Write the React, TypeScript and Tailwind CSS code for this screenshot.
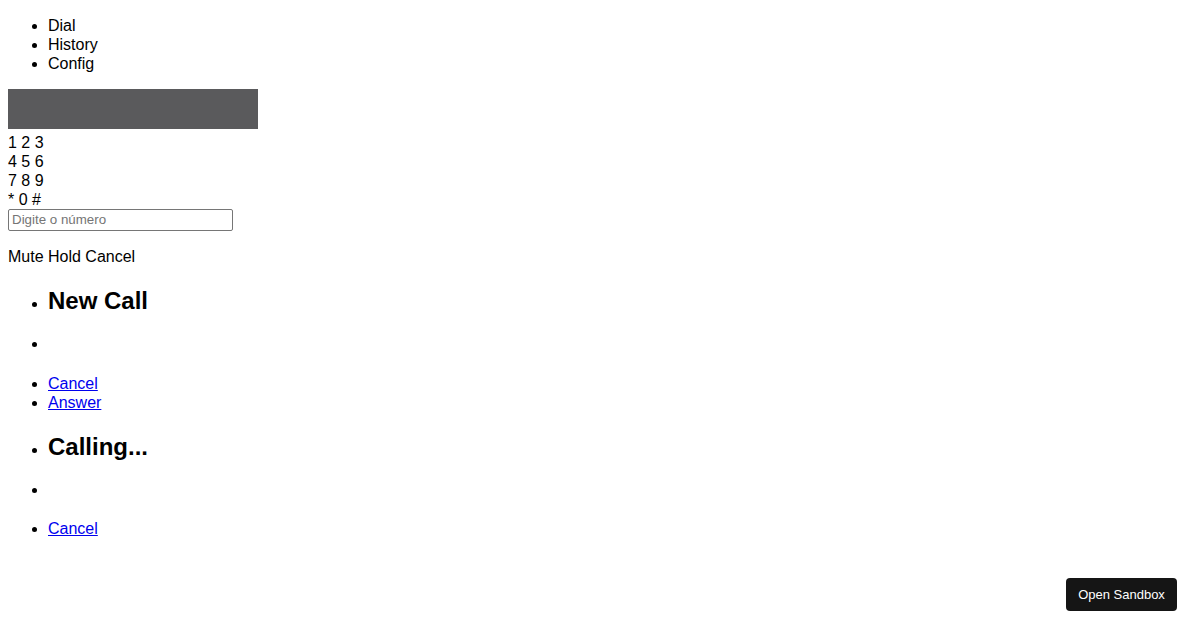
export default function App() {
  const font = { fontFamily: '"Liberation Sans", Arial, sans-serif' };
  return (
    <div className="relative h-[630px] w-[1200px] bg-white text-black" style={font}>
      <div className="px-2 pt-4 text-[16px] leading-[19px] [font-family:'Liberation_Sans',Arial,sans-serif]">
        <ul className="list-disc pl-10">
          <li>Dial</li>
          <li>History</li>
          <li>Config</li>
        </ul>
        <div className="mt-4 h-10 w-[250px] bg-[#5a5a5c]" />
        <div className="mt-1">
          <div>1 2 3</div>
          <div>4 5 6</div>
          <div>7 8 9</div>
          <div>* 0 #</div>
        </div>
        <input
          className="block h-[22px] w-[225px] rounded-[2px] border border-[#767676] px-[3px] pb-[1px] text-[13.33px] leading-[16px] placeholder:text-[#757575]"
          placeholder="Digite o número"
        />
        <p className="mt-4">Mute Hold Cancel</p>
        <ul className="list-disc pl-10">
          <li className="mt-[21px]">
            <h2 className="text-[24px] font-bold leading-[28px]">New Call</h2>
          </li>
          <li className="mt-[19px] h-[19px]" />
        </ul>
        <ul className="mt-[21px] list-disc pl-10">
          <li>
            <a href="#" className="text-[#0000ee] underline">Cancel</a>
          </li>
          <li>
            <a href="#" className="text-[#0000ee] underline">Answer</a>
          </li>
        </ul>
        <ul className="list-disc pl-10">
          <li className="mt-[21px]">
            <h2 className="text-[24px] font-bold leading-[28px]">Calling...</h2>
          </li>
          <li className="mt-[19px] h-[19px]" />
        </ul>
        <ul className="mt-[20px] list-disc pl-10">
          <li>
            <a href="#" className="text-[#0000ee] underline">Cancel</a>
          </li>
        </ul>
      </div>
      <button className="absolute bottom-[19px] right-[23px] flex h-[33px] w-[111px] items-center justify-center rounded-[4px] bg-[#151515] text-[13px] text-white">
        Open Sandbox
      </button>
    </div>
  );
}
